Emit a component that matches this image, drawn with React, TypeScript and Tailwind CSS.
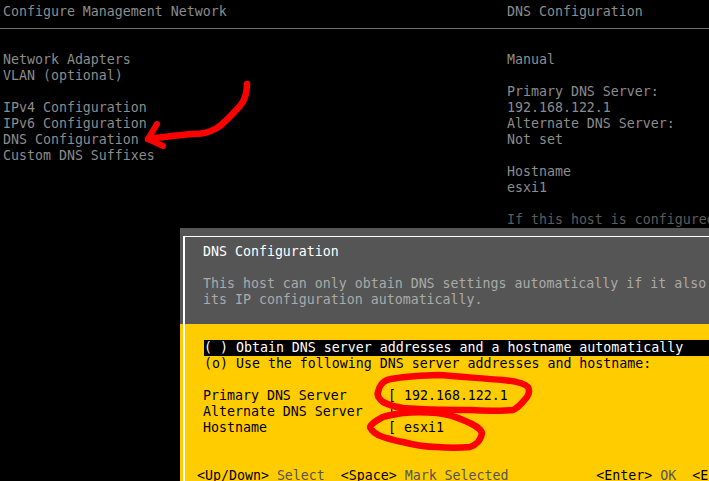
import React from "react";

const Row = ({ children, className = "" }: { children?: React.ReactNode; className?: string }) => (
  <div className={`h-4 whitespace-pre ${className}`}>{children}</div>
);

const Field = ({ label, value }: { label: string; value: string }) => (
  <div className="ml-[18px] flex h-4 whitespace-pre">
    <div className="w-[185px]">{label}</div>
    <div>{value}</div>
  </div>
);

export default function App() {
  return (
    <div
      className="relative h-[481px] w-[709px] overflow-hidden bg-black text-[13.28px] leading-4 text-[#8c8c8c]"
      style={{ fontFamily: '"DejaVu Sans Mono", "Liberation Mono", monospace' }}
    >
      <div className="flex pt-[4px]">
        <div className="w-[507px] shrink-0 pl-[3px]">
          <Row>Configure Management Network</Row>
        </div>
        <Row>DNS Configuration</Row>
      </div>
      <div className="mb-[23px] mt-[8px] h-px bg-[#6e6e6e]" />
      <div className="flex">
        <div className="w-[507px] shrink-0 pl-[3px]">
          <Row>Network Adapters</Row>
          <Row>VLAN (optional)</Row>
          <Row />
          <Row>IPv4 Configuration</Row>
          <Row>IPv6 Configuration</Row>
          <Row>DNS Configuration</Row>
          <Row>Custom DNS Suffixes</Row>
        </div>
        <div className="w-[202px] shrink-0 overflow-hidden">
          <Row>Manual</Row>
          <Row />
          <Row>Primary DNS Server:</Row>
          <Row>192.168.122.1</Row>
          <Row>Alternate DNS Server:</Row>
          <Row>Not set</Row>
          <Row />
          <Row>Hostname</Row>
          <Row>esxi1</Row>
          <Row />
          <Row className="text-[#5c5c5c]">If this host is configured</Row>
        </div>
      </div>

      <div className="absolute left-[180px] top-[228px] w-[529px]">
        <div className="bg-[#555555] pl-[3px] pt-[8px]">
          <div className="border-l-2 border-t border-white pb-4 pl-[18px] pt-[7px]">
            <Row className="text-white">DNS Configuration</Row>
            <Row />
            <Row className="text-[#aaaaaa]">This host can only obtain DNS settings automatically if it also</Row>
            <Row className="text-[#aaaaaa]">its IP configuration automatically.</Row>
          </div>
        </div>
        <div className="bg-[#ffcc00] pl-[3px] text-black">
          <div className="border-l-2 border-white pb-[2px] pt-4">
            <Row className="ml-[19px] bg-black text-white">( ) Obtain DNS server addresses and a hostname automatically</Row>
            <Row className="ml-[19px]">(o) Use the following DNS server addresses and hostname:</Row>
            <Row />
            <Field label="Primary DNS Server" value="[ 192.168.122.1" />
            <Field label="Alternate DNS Server" value="[" />
            <Field label="Hostname" value="[ esxi1" />
            <div className="h-[32px]" />
            <Row className="ml-[12px]">
              {"<Up/Down> "}
              <span className="text-[#555555]">Select</span>
              {"  <Space> "}
              <span className="text-[#555555]">Mark Selected</span>
              {"           <Enter> "}
              <span className="text-[#555555]">OK</span>
              {"  <Esc> "}
              <span className="text-[#555555]">Cancel</span>
            </Row>
          </div>
        </div>
      </div>

      <svg className="absolute left-0 top-0" width="709" height="481" viewBox="0 0 709 481" fill="none">
        <g stroke="#ff0000" strokeLinecap="round" strokeLinejoin="round">
          <path d="M247 84C247 92 245 100 240 106C233 113 226 122 217 128C208 133 202 134 192 134C178 135 163 137 148 139" strokeWidth="6.5" />
          <path d="M157 124L148 139L163 146" strokeWidth="6" />
          <path d="M387 380C402 376 420 376 437 375C460 376 482 379 503 380C513 381 524 383 528 387C530 391 529 394 527 397C522 403 518 408 513 410C498 411 484 411 470 410C448 410 425 410 403 408C395 407 389 405 383 402C379 399 377 395 378 392C379 387 382 382 387 380Z" strokeWidth="6.5" />
          <path d="M437 413C424 412 413 412 403 413C396 414 389 415 383 417C377 420 372 423 370 427C372 432 377 435 383 437C390 439 396 441 403 442C414 445 426 447 437 447C448 448 459 448 470 447C476 445 481 440 482 433C480 427 472 424 463 420C454 416 445 414 437 413Z" strokeWidth="6.5" />
        </g>
      </svg>
    </div>
  );
}
